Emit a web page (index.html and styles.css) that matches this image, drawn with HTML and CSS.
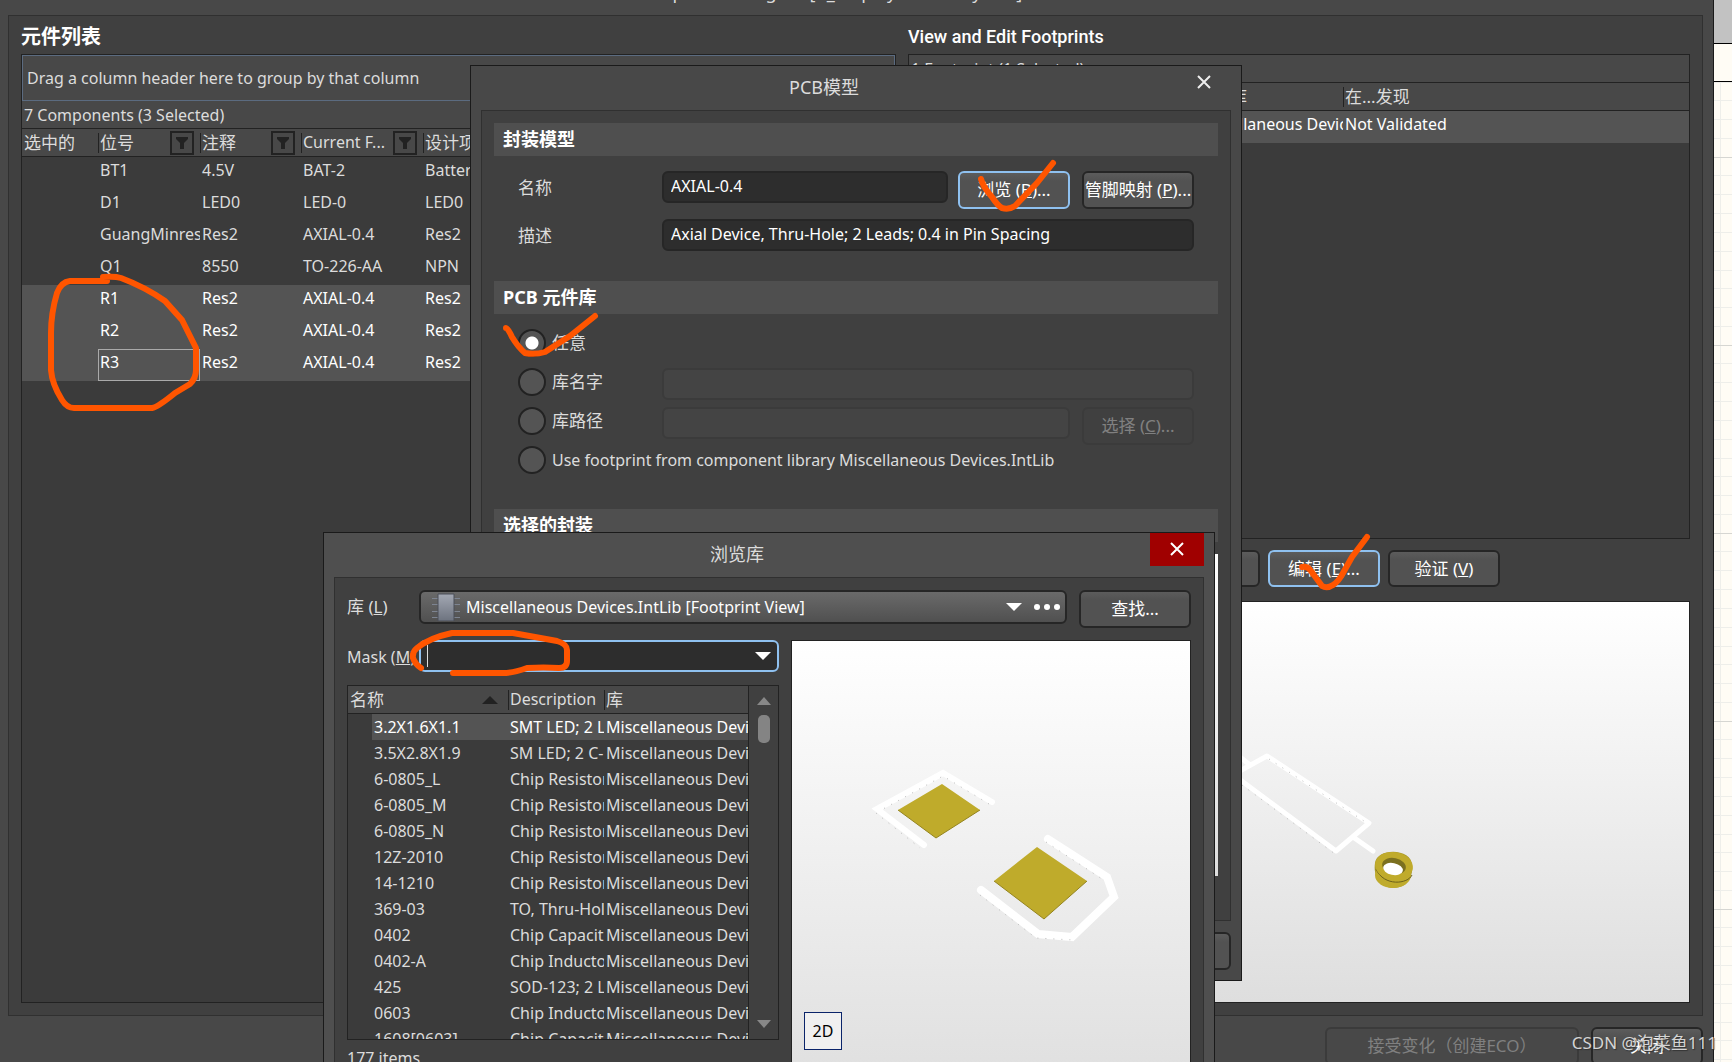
FILE: index.html
```html
<!DOCTYPE html>
<html lang="zh-CN">
<head>
  <meta charset="UTF-8">
  <meta name="viewport" content="width=device-width, initial-scale=1.0">
  <title>Footprint Manager</title>
  <link rel="stylesheet" href="styles.css">
</head>
<body>
  <div id="app">
    <!-- Footprint manager window -->
    <main class="window manager">
      <header class="title-bar">
        <h1>Footprint Manager - [A_Display Assembly.doc]</h1>
      </header>

      <div class="frame columns">
        <section class="column">
          <h2>元件列表</h2>
          <div class="grid-box">
            <div class="group-bar">Drag a column header here to group by that column</div>
            <div class="count-bar">7 Components (3 Selected)</div>
            <table class="grid">
              <colgroup>
                <col style="width: 76px"><col style="width: 102px"><col style="width: 101px"><col style="width: 122px"><col>
              </colgroup>
              <thead>
                <tr>
                  <th class="zh">选中的</th>
                  <th class="zh"><div class="head">位号<button class="filter" aria-label="位号"><svg width="14" height="14" viewBox="0 0 14 14"><path d="M1 1h12v2L9 7v6H5V7L1 3z" fill="#222"/></svg></button></div></th>
                  <th class="zh"><div class="head">注释<button class="filter" aria-label="注释"><svg width="14" height="14" viewBox="0 0 14 14"><path d="M1 1h12v2L9 7v6H5V7L1 3z" fill="#222"/></svg></button></div></th>
                  <th><div class="head">Current F...<button class="filter" aria-label="Current Footprint"><svg width="14" height="14" viewBox="0 0 14 14"><path d="M1 1h12v2L9 7v6H5V7L1 3z" fill="#222"/></svg></button></div></th>
                  <th class="zh">设计项目 ID</th>
                </tr>
              </thead>
              <tbody>
                <tr><td></td><td>BT1</td><td>4.5V</td><td>BAT-2</td><td>Battery</td></tr>
                <tr><td></td><td>D1</td><td>LED0</td><td>LED-0</td><td>LED0</td></tr>
                <tr><td></td><td>GuangMinres</td><td>Res2</td><td>AXIAL-0.4</td><td>Res2</td></tr>
                <tr><td></td><td>Q1</td><td>8550</td><td>TO-226-AA</td><td>NPN</td></tr>
                <tr class="selected"><td></td><td>R1</td><td>Res2</td><td>AXIAL-0.4</td><td>Res2</td></tr>
                <tr class="selected"><td></td><td>R2</td><td>Res2</td><td>AXIAL-0.4</td><td>Res2</td></tr>
                <tr class="selected"><td></td><td class="focused">R3</td><td>Res2</td><td>AXIAL-0.4</td><td>Res2</td></tr>
              </tbody>
            </table>
          </div>
        </section>

        <section class="column">
          <h2 class="en">View and Edit Footprints</h2>
          <div class="grid-box">
            <div class="count-bar">1 Footprint (1 Selected)</div>
            <table class="grid">
              <colgroup>
                <col style="width: 285px"><col style="width: 149px"><col>
              </colgroup>
              <thead>
                <tr><th class="zh">名称</th><th class="zh">封装库</th><th class="zh">在...发现</th></tr>
              </thead>
              <tbody>
                <tr class="selected"><td>AXIAL-0.4</td><td>Miscellaneous Devices.IntLib</td><td>Not Validated</td></tr>
              </tbody>
            </table>
          </div>
          <div class="actions">
            <button class="btn">移除 (<u>R</u>)</button>
            <button class="btn active">编辑 (<u>E</u>)...</button>
            <button class="btn">验证 (<u>V</u>)</button>
          </div>
          <div class="preview">
            <svg width="780" height="400" viewBox="910 603 780 400">
              <g fill="none" stroke="#fff" stroke-width="5" stroke-linecap="round" stroke-linejoin="round">
                <path d="M1230 778l38-21 102 67-33 28-97-72"/>
                <path d="M1236 754l15 12M1354 838l20 14"/>
              </g>
              <path d="M1270 760l98 64M1243 786l93 69" fill="none" stroke="#bbb" stroke-dasharray="1 7"/>
              <path d="M1376 864c2-16 38-15 37 3 1 7-2 22-19 22-13-1-20-12-18-25z" fill="#a8982a"/>
              <ellipse cx="1394" cy="876" rx="18" ry="13" fill="#bfab2c"/>
              <path d="M1377 870c8 18 32 15 36 6" fill="none" stroke="#6b601c"/>
              <ellipse cx="1395" cy="867" rx="19" ry="14" fill="#c0ab2b" transform="rotate(8 1395 867)"/>
              <ellipse cx="1395" cy="867" rx="12" ry="8" fill="#7b701f" transform="rotate(12 1395 867)"/>
              <ellipse cx="1394" cy="870" rx="10" ry="6" fill="#fff" transform="rotate(12 1394 870)"/>
            </svg>
          </div>
        </section>
      </div>

      <footer class="footer">
        <button class="btn wide" disabled>接受变化（创建ECO）</button>
        <button class="btn">关闭</button>
      </footer>
    </main>

    <!-- Schematic sheet behind the windows -->
    <aside class="sheet">
      <svg width="100%" height="100%">
        <defs>
          <pattern id="lines" width="100" height="188" y="157" patternUnits="userSpaceOnUse">
            <path d="M0 18.500h100M0 37.500h100M0 56.500h100M0 75.500h100M0 94.500h100M0 113.500h100M0 131.500h100M0 150.500h100M0 169.500h100" stroke="#eeeeea"/>
            <path d="M0 .5h100" stroke="#d6d6d2"/>
          </pattern>
        </defs>
        <rect width="100%" height="100%" fill="#fffcf5"/>
        <path d="M6.500 82v2000" stroke="#eeeeea"/>
        <rect y="82" width="100%" height="2000" fill="url(#lines)"/>
        <rect width="100%" height="43" fill="#c2c2c2"/>
        <path d="M0 43.500h100M0 81.500h100" stroke="#000"/>
      </svg>
    </aside>

    <!-- PCB model dialog -->
    <section class="window dialog model">
      <header class="title-bar">
        <h1>PCB模型</h1>
        <button class="close" aria-label="关闭"><svg width="14" height="14" viewBox="0 0 14 14"><path d="M1 1l12 12M13 1L1 13" stroke="#eee" stroke-width="2"/></svg></button>
      </header>
      <div class="frame">
        <h3>封装模型</h3>
        <div class="form">
          <label class="zh" for="model-name">名称</label>
          <div class="field">
            <input type="text" id="model-name" value="AXIAL-0.4">
            <button class="btn active browse">浏览 (<u>B</u>)...</button>
            <button class="btn">管脚映射 (<u>P</u>)...</button>
          </div>
          <label class="zh" for="model-desc">描述</label>
          <div class="field">
            <input type="text" id="model-desc" value="Axial Device, Thru-Hole; 2 Leads; 0.4 in Pin Spacing">
          </div>
        </div>
        <h3>PCB 元件库</h3>
        <div class="options">
          <div class="option"><input type="radio" name="lib" id="lib-any" checked><label class="zh" for="lib-any">任意</label></div>
          <div class="option">
            <input type="radio" name="lib" id="lib-name"><label class="zh" for="lib-name">库名字</label>
            <input type="text" aria-label="库名字" disabled>
          </div>
          <div class="option">
            <input type="radio" name="lib" id="lib-path"><label class="zh" for="lib-path">库路径</label>
            <input type="text" aria-label="库路径" disabled>
            <button class="btn" disabled>选择 (<u>C</u>)...</button>
          </div>
          <div class="option"><input type="radio" name="lib" id="lib-comp"><label for="lib-comp">Use footprint from component library Miscellaneous Devices.IntLib</label></div>
        </div>
        <h3>选择的封装</h3>
        <div class="selected-preview"></div>
      </div>
      <footer class="footer">
        <button class="btn">确定</button>
        <button class="btn">取消</button>
      </footer>
    </section>

    <!-- Browse libraries dialog -->
    <section class="window dialog browser">
      <header class="title-bar">
        <h1>浏览库</h1>
        <button class="close danger" aria-label="关闭"><svg width="14" height="14" viewBox="0 0 14 14"><path d="M1 1l12 12M13 1L1 13" stroke="#fff" stroke-width="2"/></svg></button>
      </header>
      <div class="frame">
        <div class="line">
          <label class="zh" for="library">库 (<u>L</u>)</label>
          <div class="combo">
            <svg width="28" height="28" viewBox="0 0 28 28">
              <defs><linearGradient id="chip" x2="0" y2="1"><stop stop-color="#a3a8b3"/><stop offset="1" stop-color="#6d737f"/></linearGradient></defs>
              <path d="M0 5.500h28M0 11.500h28M0 18.500h28M0 24.500h28" stroke="#7d8491"/>
              <path d="M6 1h16v27H6z" fill="url(#chip)" stroke="#4b4f58"/>
            </svg>
            <select id="library"><option>Miscellaneous Devices.IntLib [Footprint View]</option></select>
            <svg width="16" height="8" viewBox="0 0 16 8"><path d="M0 0h16L8 8z" fill="#fff"/></svg>
            <button class="more" aria-label="more"><svg width="26" height="6" viewBox="0 0 26 6"><g fill="#fff"><circle cx="3" cy="3" r="3"/><circle cx="13" cy="3" r="3"/><circle cx="23" cy="3" r="3"/></g></svg></button>
          </div>
          <button class="btn find">查找...</button>
        </div>
        <div class="split">
          <div class="list">
            <div class="line">
              <label for="mask">Mask (<u>M</u>)</label>
              <div class="mask">
                <span class="caret"></span>
                <input type="text" id="mask">
                <svg width="16" height="8" viewBox="0 0 16 8"><path d="M0 0h16L8 8z" fill="#fff"/></svg>
              </div>
            </div>
            <div class="grid-box">
              <table class="grid compact">
                <colgroup>
                  <col style="width: 24px"><col style="width: 136px"><col style="width: 96px"><col>
                </colgroup>
                <thead>
                  <tr>
                    <th class="zh" colspan="2"><div class="head">名称<svg class="sort" width="16" height="8" viewBox="0 0 16 8"><path d="M0 8h16L8 0z" fill="#222"/></svg></div></th>
                    <th>Description</th>
                    <th class="zh">库</th>
                  </tr>
                </thead>
                <tbody>
                  <tr class="selected"><td></td><td>3.2X1.6X1.1</td><td>SMT LED; 2 Leads</td><td>Miscellaneous Devices.IntLib</td></tr>
                  <tr><td></td><td>3.5X2.8X1.9</td><td>SM LED; 2 C-Bend</td><td>Miscellaneous Devices.IntLib</td></tr>
                  <tr><td></td><td>6-0805_L</td><td>Chip Resistor</td><td>Miscellaneous Devices.IntLib</td></tr>
                  <tr><td></td><td>6-0805_M</td><td>Chip Resistor</td><td>Miscellaneous Devices.IntLib</td></tr>
                  <tr><td></td><td>6-0805_N</td><td>Chip Resistor</td><td>Miscellaneous Devices.IntLib</td></tr>
                  <tr><td></td><td>12Z-2010</td><td>Chip Resistor</td><td>Miscellaneous Devices.IntLib</td></tr>
                  <tr><td></td><td>14-1210</td><td>Chip Resistor</td><td>Miscellaneous Devices.IntLib</td></tr>
                  <tr><td></td><td>369-03</td><td>TO, Thru-Hole</td><td>Miscellaneous Devices.IntLib</td></tr>
                  <tr><td></td><td>0402</td><td>Chip Capacitor</td><td>Miscellaneous Devices.IntLib</td></tr>
                  <tr><td></td><td>0402-A</td><td>Chip Inductor</td><td>Miscellaneous Devices.IntLib</td></tr>
                  <tr><td></td><td>425</td><td>SOD-123; 2 Leads</td><td>Miscellaneous Devices.IntLib</td></tr>
                  <tr><td></td><td>0603</td><td>Chip Inductor</td><td>Miscellaneous Devices.IntLib</td></tr>
                  <tr><td></td><td>1608[0603]</td><td>Chip Capacitor</td><td>Miscellaneous Devices.IntLib</td></tr>
                </tbody>
              </table>
              <div class="scrollbar">
                <svg width="14" height="8" viewBox="0 0 14 8"><path d="M0 8h14L7 0z" fill="#888"/></svg>
                <span class="thumb"></span>
                <svg width="14" height="8" viewBox="0 0 14 8"><path d="M0 0h14L7 8z" fill="#888"/></svg>
              </div>
            </div>
            <p>177 items</p>
          </div>
          <div class="preview">
            <svg width="398" height="420" viewBox="0 0 398 420">
              <g fill="none" stroke="#fff" stroke-linecap="round">
                <path d="M200 161l-49-29-66 36 47 36" stroke-width="6"/>
                <path d="M256 198l59 38 7 20-42 40-34-3-57-44" stroke-width="8"/>
              </g>
              <path d="M197 163l-46-28-60 33M84 172l44 35M188 254l56 43 38 2M254 201l56 37" fill="none" stroke="#bbb" stroke-dasharray="1 7"/>
              <path d="M150 143l38 26-44 28-38-28zM245 206l50 34-43 38-50-38z" fill="#bfab2b"/>
              <path d="M106 169l38 28 44-28M202 240l50 38 43-38" fill="none" stroke="#94841f"/>
            </svg>
            <button class="view-mode">2D</button>
          </div>
        </div>
      </div>
    </section>

    <!-- Pen marks -->
    <svg class="marks" width="1732" height="1062" viewBox="0 0 1732 1062">
      <g fill="none" stroke="#ff5500" stroke-width="6" stroke-linecap="round" stroke-linejoin="round">
        <path d="M107 281H70q-9 1-13 12-6 20-6 40v37q1 14 11 30 5 8 12 8h78q6-1 23-15l15-9q6-6 6-14v-22l-14-28-17-19q-20-14-44-23-6-2-18-1"/>
        <path d="M981 179q2 8 11 18 6 9 10 11 7 2 13-2l22-23 16-20"/>
        <path d="M506 328q2 0 6 9 6 10 13 16 10 2 20-1l25-16 25-20"/>
        <path d="M1302 567q6-1 9 4l11 15q5 3 11-1 6-4 10-12l9-16 15-20"/>
        <path d="M421 668q-6-4-8-10-1-6 4-10 12-10 35-15h61l44 8q10 3 10 9v11q0 7-8 7-15-1-32 0-14 5-24 5h-50"/>
      </g>
    </svg>
    <div class="watermark">CSDN @泡菜鱼111</div>
  </div>
</body>
</html>
```
FILE: styles.css
```css
* {
  box-sizing: border-box;
}

body {
  margin: 0;
  height: 100vh;
  overflow: hidden;
  background-color: #464646;
  color: #dcdcdc;
  font-family: "Noto Sans", "Noto Sans CJK SC", sans-serif;
  font-size: 16px;
  line-height: 24px;
}

#app {
  position: relative;
  display: flex;
  height: 100vh;
  overflow: hidden;
}

h1, h2, h3, p {
  margin: 0;
}

h1 {
  flex: 1;
  font-size: 18px;
  font-weight: 400;
  text-align: center;
}

.zh {
  font-size: 17px;
}

button, input, select {
  font-family: inherit;
  font-size: 16px;
  color: #fff;
}

/* Windows */
.window {
  display: flex;
  flex-direction: column;
  background-color: #484848;
  border: 1px solid #1a1a1a;
}

.title-bar {
  display: flex;
  flex: 0 0 44px;
  align-items: center;
  padding: 0 10px 2px 0;
}

.frame {
  flex: 1;
  min-height: 0;
  background-color: #404040;
  border: 1px solid #303030;
}

.footer {
  display: flex;
  justify-content: flex-end;
  gap: 12px;
  padding: 11px 0 10px;
}

.manager {
  flex: 1;
  min-width: 0;
  height: calc(100vh + 44px);
  margin-top: -30px;
  padding: 0 10px 0 8px;
  border-left: none;
}

.manager .title-bar {
  padding-right: 54px;
}

.columns {
  display: grid;
  grid-template-columns: 875fr 782fr;
  gap: 12px;
  padding: 0 12px 12px;
}

.column {
  display: flex;
  flex-direction: column;
  min-width: 0;
  min-height: 0;
}

.column h2 {
  height: 38px;
  padding-top: 2px;
  font-size: 20px;
  line-height: 38px;
  font-weight: 700;
  color: #fff;
}

.column h2.en {
  font-family: Roboto, sans-serif;
  font-size: 18px;
  font-weight: 500;
}

/* Grids */
.grid-box {
  flex: 1;
  min-height: 0;
  overflow: hidden;
  background-color: #3b3b3b;
  border: 1px solid #222;
}

.group-bar {
  height: 46px;
  padding: 0 4px;
  line-height: 44px;
  background-color: #484848;
  border: 1px solid #5b6b80;
}

.count-bar {
  height: 28px;
  padding: 0 2px;
  line-height: 28px;
  background-color: #484848;
  border-bottom: 1px solid #222;
}

.grid {
  width: 100%;
  table-layout: fixed;
  border-collapse: separate;
  border-spacing: 0;
}

.grid th {
  height: 28px;
  padding: 0 2px;
  line-height: 27px;
  font-weight: 400;
  text-align: left;
  white-space: nowrap;
  overflow: hidden;
  background: linear-gradient(#222, #222) left center / 1px 20px no-repeat #484848;
  border-bottom: 1px solid #222;
}

.grid th:first-child {
  background: #484848;
}

.grid td {
  height: 32px;
  padding: 0 0 6px 2px;
  line-height: 26px;
  white-space: nowrap;
  overflow: hidden;
}

.grid .selected td {
  background-color: #545454;
  color: #fff;
}

.grid td.focused {
  padding: 0 0 6px 1px;
  line-height: 24px;
  border: 1px solid #aaa;
}

.grid.compact td {
  height: 26px;
  padding-bottom: 0;
}

.grid.compact .selected td:first-child {
  background: none;
}

.head {
  display: flex;
  align-items: center;
  justify-content: space-between;
  height: 27px;
}

.filter {
  display: flex;
  align-items: center;
  justify-content: center;
  width: 24px;
  height: 24px;
  margin-right: 4px;
  padding: 0;
  background: none;
  border: 2px solid #222;
}

.sort {
  margin-right: 8px;
}

/* Controls */
.btn {
  flex: 0 0 112px;
  height: 38px;
  padding: 0 0 3px;
  font-size: 17px;
  white-space: nowrap;
  background: linear-gradient(#5c5c5c, #525252 8px);
  border: 2px solid #262626;
  border-radius: 6px;
}

.btn.active {
  border-color: #8fc1f0;
}

.btn.wide {
  flex-basis: 254px;
}

.btn:disabled {
  color: #808080;
  background: none;
  border-color: #3b3b3b;
}

.actions {
  display: flex;
  gap: 8px;
  padding: 11px 0 14px 240px;
}

.actions .btn {
  height: 37px;
}

.preview {
  position: relative;
  overflow: hidden;
  background: linear-gradient(#fff, #dedede);
  border: 1px solid #222;
}

.preview svg {
  display: block;
}

.column .preview {
  flex: 0 0 402px;
}

input[type="text"] {
  flex: 1;
  min-width: 0;
  height: 32px;
  padding: 0 7px 2px;
  background-color: #2d2d2d;
  border: 2px solid #262626;
  border-radius: 6px;
  outline: none;
}

input[type="text"]:disabled {
  background-color: #444;
  border-color: #3b3b3b;
}

input[type="radio"] {
  appearance: none;
  width: 28px;
  height: 28px;
  margin: 0;
  background-color: #545454;
  border: 2px solid #222;
  border-radius: 50%;
}

input[type="radio"]:checked {
  background: radial-gradient(circle, #fff 6px, #545454 7px);
}

.close {
  display: flex;
  align-items: center;
  justify-content: center;
  align-self: flex-start;
  width: 54px;
  height: 33px;
  padding: 0 0 2px;
  background: none;
  border: none;
}

.close.danger {
  background-color: #a00000;
}

/* PCB model dialog */
.dialog {
  position: absolute;
}

.model {
  left: 470px;
  top: 65px;
  width: 772px;
  height: 916px;
  padding: 0 10px;
}

.model .title-bar {
  margin: 0 -10px;
}

.model .frame {
  padding: 12px;
}

.model h3 {
  height: 33px;
  padding: 0 9px;
  font-size: 18px;
  font-weight: 700;
  line-height: 33px;
  color: #fff;
  background-color: #4f4f4f;
}

.form {
  display: grid;
  grid-template-columns: 144px 1fr;
  row-gap: 10px;
  padding: 15px 24px 28px;
}

.form label {
  line-height: 34px;
}

.field {
  display: flex;
  align-items: flex-start;
  gap: 12px;
}

.field .browse {
  margin-left: -2px;
}

.options {
  padding: 15px 24px 24px;
}

.option {
  display: flex;
  align-items: flex-start;
  height: 39px;
}

.option label {
  padding-left: 6px;
  line-height: 28px;
}

.option input[type="text"] {
  margin-left: 12px;
}

.option label[for="lib-name"],
.option label[for="lib-path"] {
  width: 104px;
}

.option .btn {
  margin-left: 12px;
}

.selected-preview {
  height: 322px;
  margin-top: 12px;
  background: linear-gradient(#fff, #dedede);
}

/* Browse libraries dialog */
.browser {
  left: 323px;
  top: 532px;
  width: 892px;
  height: 620px;
  padding: 0 10px;
  background-color: #4f4f4f;
}

.browser .title-bar {
  margin: 0 -10px;
}

.browser .frame {
  padding: 12px;
}

.line {
  display: flex;
  align-items: flex-start;
}

.line label {
  flex: 0 0 72px;
  line-height: 34px;
  white-space: nowrap;
}

.combo {
  display: flex;
  flex: 1;
  align-items: center;
  height: 34px;
  padding: 0 5px 0 11px;
  background: linear-gradient(#6a6a6a, #505050);
  border: 2px solid #262626;
  border-radius: 6px;
}

.combo select {
  flex: 1;
  height: 30px;
  padding: 0 6px;
  appearance: none;
  background: none;
  border: none;
}

.more {
  display: flex;
  margin-left: 12px;
  padding: 0;
  background: none;
  border: none;
}

.find {
  margin-left: 12px;
}

.split {
  display: flex;
  gap: 12px;
  padding-top: 12px;
}

.split .list {
  flex: 0 0 432px;
}

.split .preview {
  flex: 1;
  height: 460px;
}

.list .line {
  height: 32px;
}

.mask {
  display: flex;
  flex: 1;
  align-items: center;
  height: 32px;
  padding: 0 6px;
  background-color: #2d2d2d;
  border: 2px solid #8fc1f0;
  border-radius: 6px;
}

.mask input[type="text"] {
  height: 24px;
  background: none;
  border: none;
}

.caret {
  width: 1px;
  height: 22px;
  background-color: #ddd;
}

.list .grid-box {
  display: flex;
  height: 355px;
  margin-top: 13px;
}

.list .grid {
  flex: 1;
  align-self: flex-start;
}

.scrollbar {
  display: flex;
  flex: 0 0 30px;
  flex-direction: column;
  align-items: center;
  padding: 11px 0;
  background-color: #404040;
  border-left: 1px solid #222;
}

.scrollbar .thumb {
  width: 12px;
  height: 28px;
  margin: 10px 0 auto;
  background-color: #848484;
  border-radius: 5px;
}

.list p {
  padding-top: 6px;
}

.view-mode {
  position: absolute;
  left: 12px;
  top: 371px;
  width: 38px;
  height: 38px;
  padding: 0;
  color: #000;
  background-color: #f0f0f0;
  border: 1px solid #0a246a;
}

/* Sheet, marks and watermark */
.sheet {
  flex: 0 0 18px;
}

.sheet svg {
  display: block;
}

.marks {
  position: absolute;
  left: 0;
  top: 0;
  pointer-events: none;
}

.watermark {
  position: absolute;
  right: 15px;
  bottom: 7px;
  font-size: 17px;
  color: #d4d4d4;
  text-shadow: 1px 1px 1px #333;
}
```
